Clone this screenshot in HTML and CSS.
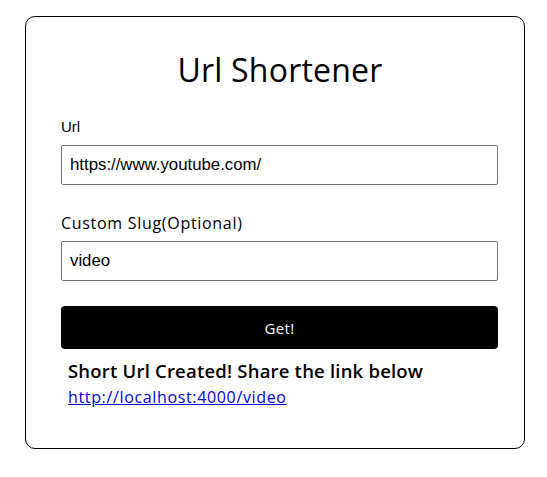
FILE: index.html
```html
<!DOCTYPE html>
<html>
<head>
<meta charset="utf-8">
<link rel="stylesheet" href="styles.css">
</head>
<body>
<div class="card">
  <h1 class="title">Url Shortener</h1>
  <form class="form">
    <label class="label label-url">Url</label>
    <input class="field" type="text" value="https://www.youtube.com/">
    <label class="label label-slug">Custom Slug(Optional)</label>
    <input class="field" type="text" value="video">
    <button class="btn" type="button">Get!</button>
  </form>
  <div class="result">
    <h3 class="result-title">Short Url Created! Share the link below</h3>
    <a class="result-link" href="#">http://localhost:4000/video</a>
  </div>
</div>
</body>
</html>
```
FILE: styles.css
```css
html, body {
  margin: 0;
  padding: 0;
  background: #fff;
}
body {
  font-family: "Open Sans", "DejaVu Sans", sans-serif;
  color: #000;
}
.card {
  box-sizing: border-box;
  width: 500px;
  height: 433px;
  margin: 16px 0 0 25px;
  border: 1px solid #000;
  border-radius: 10px;
  padding: 0 25px 0 35px;
}
.title {
  margin: 33px 0 0 0;
  font-size: 32px;
  line-height: 40px;
  font-weight: 400;
  letter-spacing: 0.2px;
  text-align: center;
}
.form {
  display: flex;
  flex-direction: column;
}
.label {
  font-size: 16px;
  line-height: 20px;
  display: block;
}
.label-url {
  font-family: "Liberation Sans", Arial, sans-serif;
  font-size: 15px;
  margin-top: 27px;
}
.label-slug {
  margin-top: 28px;
  letter-spacing: 0.7px;
}
.field {
  box-sizing: border-box;
  width: 437px;
  height: 40px;
  margin-top: 8px;
  border: 1px solid #767676;
  border-radius: 2px;
  padding: 0 8px;
  font-family: "Liberation Sans", Arial, sans-serif;
  font-size: 16.8px;
  color: #000;
  outline: none;
}
.btn {
  box-sizing: border-box;
  width: 437px;
  height: 43px;
  margin-top: 25px;
  border: none;
  border-radius: 4px;
  background: #000;
  color: #fff;
  font-family: "Open Sans", sans-serif;
  font-size: 15px;
  font-weight: 400;
  letter-spacing: 0.4px;
}
.result {
  padding-left: 7px;
  margin-top: 10px;
}
.result-title {
  margin: 0;
  font-size: 18.5px;
  line-height: 24px;
  font-weight: 600;
  letter-spacing: 0.2px;
}
.result-link {
  display: inline-block;
  margin-top: 3px;
  font-size: 16px;
  line-height: 22px;
  letter-spacing: 0.65px;
  color: #0000ee;
}
```
